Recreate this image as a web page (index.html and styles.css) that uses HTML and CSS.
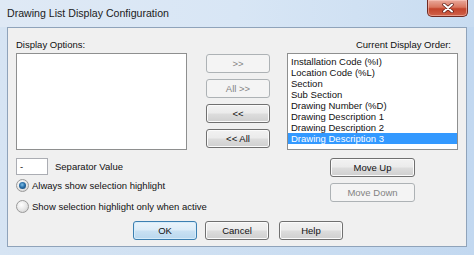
FILE: index.html
```html
<!DOCTYPE html>
<html>
<head>
<meta charset="utf-8">
<link rel="stylesheet" href="styles.css">
</head>
<body>
<div class="window">
  <div class="titlebar">
    <span class="title">Drawing List Display Configuration</span>
    <span class="close">
      <svg width="14" height="10" viewBox="0 0 14 10"><path d="M3 1.5 L11 8.5 M11 1.5 L3 8.5" stroke="#5a1a14" stroke-width="3.4" stroke-linecap="round"/><path d="M3 1.5 L11 8.5 M11 1.5 L3 8.5" stroke="#ffffff" stroke-width="2" stroke-linecap="round"/></svg>
    </span>
  </div>
  <div class="client">
    <div class="top">
      <div class="col-list">
        <div class="label">Display Options:</div>
        <div class="listbox"></div>
      </div>
      <div class="col-mid">
        <div class="btn disabled">&gt;&gt;</div>
        <div class="btn disabled">All &gt;&gt;</div>
        <div class="btn">&lt;&lt;</div>
        <div class="btn">&lt;&lt; All</div>
      </div>
      <div class="col-list col-right">
        <div class="label right">Current Display Order:</div>
        <div class="listbox items">
          <div class="item">Installation Code (%I)</div>
          <div class="item">Location Code (%L)</div>
          <div class="item">Section</div>
          <div class="item">Sub Section</div>
          <div class="item">Drawing Number (%D)</div>
          <div class="item">Drawing Description 1</div>
          <div class="item">Drawing Description 2</div>
          <div class="item selected">Drawing Description 3</div>
        </div>
      </div>
    </div>
    <div class="mid">
      <div class="options">
        <div class="sep-row">
          <div class="textbox">-</div>
          <span class="sep-label">Separator Value</span>
        </div>
        <div class="radio-row first">
          <span class="radio checked"></span>
          <span>Always show selection highlight</span>
        </div>
        <div class="radio-row">
          <span class="radio"></span>
          <span>Show selection highlight only when active</span>
        </div>
      </div>
      <div class="move">
        <div class="btn wide">Move Up</div>
        <div class="btn wide disabled">Move Down</div>
      </div>
    </div>
    <div class="bottom">
      <div class="btn default">OK</div>
      <div class="btn">Cancel</div>
      <div class="btn help">Help</div>
    </div>
  </div>
</div>
</body>
</html>
```

FILE: styles.css
```css
html, body {
  margin: 0;
  padding: 0;
}
body {
  width: 474px;
  height: 255px;
  overflow: hidden;
  background: #c4d9ef;
  font-family: "Liberation Sans", Arial, sans-serif;
  font-size: 9.5px;
  color: #111;
}
.window {
  width: 474px;
  height: 255px;
  background: linear-gradient(90deg, #d6e4f3 0%, #cfe0f2 40%, #c2d8f0 100%);
  display: flex;
  flex-direction: column;
}
.titlebar {
  height: 27px;
  display: flex;
  align-items: flex-start;
  background: linear-gradient(90deg, #dfe9f5 0%, #d8e6f5 50%, #c8dcf1 100%);
}
.title {
  font-size: 10.6px;
  line-height: 27px;
  padding-left: 7px;
  color: #1b1b1b;
}
.close {
  margin-left: auto;
  margin-right: 6px;
  width: 41px;
  height: 17px;
  box-sizing: border-box;
  border: 1px solid #6f2a22;
  border-top: none;
  border-radius: 0 0 5px 5px;
  background: linear-gradient(#e9a99c 0%, #d9765f 45%, #c3442c 55%, #d0634a 100%);
  box-shadow: inset 0 0 0 1px rgba(255, 210, 200, 0.5);
  display: flex;
  align-items: center;
  justify-content: center;
}
.client {
  margin: 0 7px 0 7px;
  height: 220px;
  box-sizing: border-box;
  border: 1px solid #8fa3ba;
  background: #f0f0f0;
  padding: 11px 8px 0 8px;
}
.top {
  display: flex;
}
.col-list {
  width: 171px;
  display: flex;
  flex-direction: column;
}
.label {
  line-height: 11px;
  height: 11px;
  margin-bottom: 3px;
}
.label.right {
  text-align: right;
  padding-right: 7px;
}
.listbox {
  height: 97px;
  box-sizing: border-box;
  border: 1px solid #8e8f8f;
  background: #fff;
}
.items {
  padding-top: 2px;
}
.item {
  height: 11px;
  line-height: 11px;
  padding-left: 3px;
  white-space: nowrap;
}
.item.selected {
  background: #3399ff;
  color: #fff;
}
.col-mid {
  width: 64px;
  margin-left: 19px;
  padding-top: 15px;
  display: flex;
  flex-direction: column;
  gap: 6px;
}
.col-right {
  margin-left: 17px;
}
.btn {
  width: 64px;
  height: 19px;
  box-sizing: border-box;
  border: 1px solid #707070;
  border-radius: 3px;
  background: linear-gradient(#f2f2f2 0%, #ebebeb 48%, #dddddd 52%, #cfcfcf 100%);
  box-shadow: inset 0 0 0 1px #fbfbfb;
  color: #111;
  display: flex;
  align-items: center;
  justify-content: center;
  line-height: 11px;
}
.btn.disabled {
  border-color: #adb2b5;
  background: #f4f4f4;
  box-shadow: none;
  color: #838383;
}
.btn.default {
  border-color: #3c7fb1;
  background: linear-gradient(#eaf4fb 0%, #dcecf8 48%, #c9e1f3 52%, #b9d7ee 100%);
  box-shadow: inset 0 0 0 1px #d6ecfa;
}
.mid {
  display: flex;
  margin-top: 8px;
}
.options {
  width: 314px;
}
.sep-row {
  display: flex;
  align-items: center;
  height: 17px;
}
.textbox {
  width: 32px;
  height: 17px;
  box-sizing: border-box;
  border: 1px solid #abadb3;
  background: #fff;
  line-height: 15px;
  padding-left: 3px;
}
.sep-label {
  margin-left: 7px;
}
.radio-row {
  display: flex;
  align-items: center;
  height: 13px;
  margin-top: 8px;
}
.radio-row.first {
  margin-top: 4px;
}
.radio {
  width: 13px;
  height: 13px;
  box-sizing: border-box;
  border-radius: 50%;
  border: 1px solid #9a9a9a;
  background: radial-gradient(circle at 40% 35%, #ffffff 0%, #e6e6e6 55%, #c8c8c8 100%);
  margin-right: 3px;
  display: flex;
  align-items: center;
  justify-content: center;
}
.radio.checked::after {
  content: "";
  width: 7px;
  height: 7px;
  border-radius: 50%;
  background: radial-gradient(circle at 45% 40%, #7ec0ea 0%, #2a6fa8 45%, #0f3e6a 100%);
}
.move {
  width: 85px;
  display: flex;
  flex-direction: column;
  gap: 6px;
}
.btn.wide {
  width: 85px;
}
.bottom {
  display: flex;
  margin-top: 8px;
  padding-left: 117px;
  gap: 8px;
}
.btn.help {
  margin-left: 2px;
}
```
